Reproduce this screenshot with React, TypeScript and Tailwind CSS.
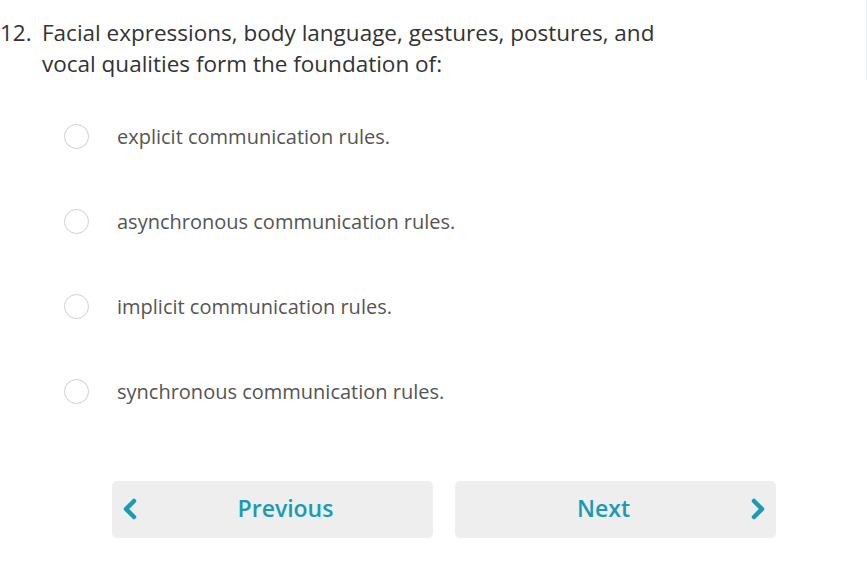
const options = [
  'explicit communication rules.',
  'asynchronous communication rules.',
  'implicit communication rules.',
  'synchronous communication rules.',
];

function Chevron({ dir }: { dir: 'left' | 'right' }) {
  return (
    <svg width="16" height="22" viewBox="0 0 16 22" className="shrink-0">
      <path
        d={dir === 'left' ? 'M12 3 L4 11 L12 19' : 'M4 3 L12 11 L4 19'}
        fill="none"
        stroke="#1a9bb5"
        strokeWidth="4.5"
        strokeLinecap="round"
        strokeLinejoin="round"
      />
    </svg>
  );
}

export default function App() {
  return (
    <div
      className="w-[867px] h-[562px] bg-white relative overflow-hidden"
      style={{ fontFamily: '"Open Sans", sans-serif' }}
    >
      <div className="absolute right-0 top-0 h-[80px] w-px bg-[#e3eef7]" />
      <div className="flex pt-[17px] text-[22.5px] leading-[31px] text-[#333]">
        <span className="w-[42px] shrink-0">12.</span>
        <p className="w-[660px]">
          Facial expressions, body language, gestures, postures, and vocal qualities form the foundation of:
        </p>
      </div>

      <div className="flex flex-col mt-[15px] pl-[64px]">
        {options.map((opt) => (
          <label key={opt} className="flex items-center h-[85px] cursor-pointer">
            <span className="w-[25px] h-[25px] rounded-full border border-[#cfcfcf] bg-white shrink-0" />
            <span className="ml-[28px] text-[20px] text-[#555]">{opt}</span>
          </label>
        ))}
      </div>

      <div className="absolute left-[112px] top-[481px] flex gap-[22px]">
        <button className="w-[321px] h-[57px] rounded-[5px] bg-[#eeeeee] flex items-center px-[10px] pb-[2px] text-[#1a9bb5] text-[23px] font-semibold">
          <Chevron dir="left" />
          <span className="flex-1 text-center pl-[10px]">Previous</span>
        </button>
        <button className="w-[321px] h-[57px] rounded-[5px] bg-[#eeeeee] flex items-center px-[10px] pb-[2px] text-[#1a9bb5] text-[23px] font-semibold">
          <span className="flex-1 text-center pr-[8px]">Next</span>
          <Chevron dir="right" />
        </button>
      </div>
    </div>
  );
}
